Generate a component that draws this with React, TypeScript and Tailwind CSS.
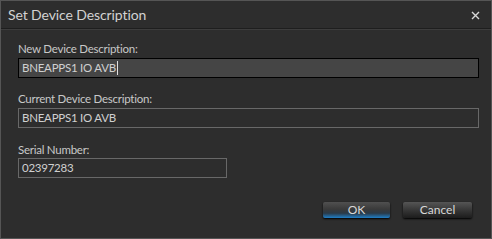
import React from "react";

export default function App() {
  const font = { fontFamily: 'Lato, "Open Sans", sans-serif' };
  return (
    <div
      className="w-[492px] h-[239px] bg-[#2d2d2d] border border-[#555555] flex flex-col text-[#c8c8c8] overflow-hidden"
      style={font}
    >
      <div className="h-[28px] flex items-center justify-between pl-[7px] pr-[11px] border-b border-[#1e1e1e] shrink-0">
        <span className="text-[14px] tracking-[-0.1px] text-[#d2d2d2]">Set Device Description</span>
        <svg width="9" height="9" viewBox="0 0 9 9" className="mt-[1px]">
          <path d="M1 1L8 8M8 1L1 8" stroke="#d8d8d8" strokeWidth="1.4" />
        </svg>
      </div>
      <div className="border-t border-[#3d3d3d] flex-1 flex flex-col pl-[17px] pr-[12px] text-[11.5px] tracking-[-0.25px]">
        <div className="leading-[16px] mt-[11px] mb-[1px]">New Device Description:</div>
        <div className="h-[20px] w-[461px] bg-[#454545] border border-black flex items-center pl-[3px] text-[#d0d0d0]">
          BNEAPPS1 IO AVB<span className="inline-block w-[1px] h-[14px] bg-[#e0e0e0] ml-[1px]" />
        </div>
        <div className="leading-[16px] mt-[13px] mb-[1px]">Current Device Description:</div>
        <div className="h-[20px] w-[461px] border border-[#686868] flex items-center pl-[3px] text-[#d0d0d0]">
          BNEAPPS1 IO AVB
        </div>
        <div className="leading-[16px] mt-[14px]">Serial Number:</div>
        <div className="h-[20px] w-[209px] border border-[#686868] flex items-center pl-[3px] text-[#d0d0d0]">
          02397283
        </div>
        <div className="flex justify-end gap-[13px] mt-[24px] pr-[7px]">
          <button className="w-[67px] h-[16px] rounded-[2px] text-[12px] leading-[16px] tracking-normal text-[#d8d8d8] bg-[linear-gradient(to_bottom,#505050_0%,#3a3a3a_45%,#2a3a48_70%,#1f7fc8_100%)] shadow-[0_1px_2px_#000]">
            OK
          </button>
          <button className="w-[69px] h-[16px] rounded-[2px] text-[12px] leading-[16px] tracking-normal text-[#d8d8d8] bg-[linear-gradient(to_bottom,#555555_0%,#3a3a3a_45%,#1c1c1c_100%)] shadow-[0_1px_2px_#000]">
            Cancel
          </button>
        </div>
      </div>
    </div>
  );
}
